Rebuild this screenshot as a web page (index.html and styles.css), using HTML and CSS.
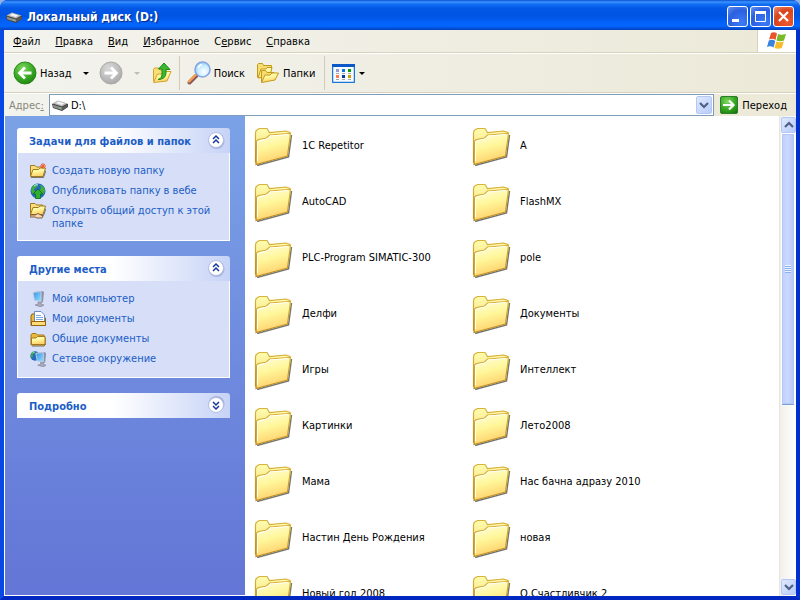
FILE: index.html
```html
<!DOCTYPE html>
<html lang="ru">
<head>
  <meta charset="UTF-8" />
  <meta name="viewport" content="width=device-width, initial-scale=1.0" />
  <title>Локальный диск (D:)</title>
  <link rel="stylesheet" href="styles.css">
</head>
<body>
  <!-- shared icons -->
  <svg class="defs" width="0" height="0" aria-hidden="true">
    <defs>
      <linearGradient id="folderFront" x1="0" y1="0" x2="0.3" y2="1">
        <stop offset="0" stop-color="#fffde0" /><stop offset="0.5" stop-color="#fff79a" /><stop offset="1" stop-color="#ffd06c" />
      </linearGradient>
      <linearGradient id="folderBack" x1="0" y1="0" x2="0" y2="1">
        <stop offset="0" stop-color="#fffbb0" /><stop offset="1" stop-color="#f5d860" />
      </linearGradient>
      <linearGradient id="folderEdge" x1="0" y1="0" x2="0" y2="1">
        <stop offset="0" stop-color="#d9b43c" /><stop offset="1" stop-color="#b98a1c" />
      </linearGradient>
      <radialGradient id="green" cx="0.4" cy="0.3" r="0.8">
        <stop offset="0" stop-color="#7fd860" /><stop offset="0.6" stop-color="#35a520" /><stop offset="1" stop-color="#1a7a0c" />
      </radialGradient>
      <radialGradient id="gray" cx="0.4" cy="0.3" r="0.8">
        <stop offset="0" stop-color="#dadada" /><stop offset="1" stop-color="#a5a5a5" />
      </radialGradient>
      <radialGradient id="lens" cx="0.6" cy="0.65" r="0.7">
        <stop offset="0" stop-color="#ffffff" /><stop offset="0.6" stop-color="#c4ebff" /><stop offset="1" stop-color="#7fc4f2" />
      </radialGradient>
      <linearGradient id="screen" x1="0" y1="0" x2="1" y2="1">
        <stop offset="0" stop-color="#2f8fe8" /><stop offset="1" stop-color="#8fe4ff" />
      </linearGradient>
      <symbol id="folder" viewBox="0 0 40 40">
        <path d="M4 39.500L35.500 31 38.500 9" fill="none" stroke="#3a3a3a" stroke-width="1.500" opacity="0.7" />
        <path d="M2.500 36V7q0-2.500 2-3.500l2-1h7.500l2.500 4 16-1.500 4.500 1.500v5L33 29z" fill="url(#folderBack)" stroke="url(#folderEdge)" stroke-width="1.200" />
        <path d="M3 38.500L3.500 15l2-1.500 8-1.500 3-3L37.500 7.500 34.500 30z" fill="url(#folderFront)" stroke="url(#folderEdge)" stroke-width="1.200" />
        <path d="M4.500 35V15.500l9.500-2.500 3-3 18.500-1.500" fill="none" stroke="#fffff4" />
      </symbol>
      <symbol id="smallFolder" viewBox="0 0 16 16">
        <path d="M2 15h12l2-2V6" fill="none" stroke="#77705c" />
        <path d="M1 14V4l1-1.500h4L7.500 4H14v2l1 1v7z" fill="#e9b93c" stroke="#a87818" />
        <path d="M1.500 13.500V7H6l1.500-1.500H15v8z" fill="url(#folderFront)" stroke="#a87818" />
      </symbol>
      <symbol id="openFolder" viewBox="0 0 16 16">
        <path d="M0.500 13V2.500h4.500L6.500 4h6v4" fill="#f9dd78" stroke="#a07a20" />
        <path d="M0.500 13.500L3 6.500h5.500L10 5h5.500L13 13.500z" fill="url(#folderFront)" stroke="#a07a20" />
        <path d="M1 14.500h12.500l2.500-7" fill="none" stroke="#4b4636" opacity="0.7" />
      </symbol>
      <symbol id="disk" viewBox="0 0 16 12">
        <path d="M0 5l6-3 10 3v3l-6 4-9-3z" fill="#3f3f3f" />
        <path d="M0.500 4.500L6 1.500l9.500 3L10 7.500z" fill="#b9b9b9" />
        <path d="M3.500 4l3-1.500 6 2L9.500 6z" fill="#f4f4f4" />
        <path d="M0.500 5.500L10 8.500v2.500L1.500 8.500z" fill="#8c8c8c" />
        <path d="M10 8.500l5.500-3V8L10 11z" fill="#5c5c5c" />
        <path d="M7 9h2" stroke="#7bd07b" />
      </symbol>
      <symbol id="computer" viewBox="0 0 16 16">
        <path d="M4 1l8-1 2 1-1 10-2 1z" fill="#8e93ac" />
        <path d="M3 1.500l8-1v10l-6.500-1z" fill="url(#screen)" stroke="#c6cbe0" />
        <path d="M8 11l3 .5V13l3 1-3 2-6-2 3-1z" fill="#a9a9b8" stroke="#74748a" stroke-width="0.500" />
      </symbol>
      <symbol id="globe" viewBox="0 0 16 16">
        <circle cx="8" cy="8" r="7.500" fill="#2467c4" />
        <path d="M2 4q3-4 6-3l-1 3-3 2 1 3-2 2Q0 8 2 4zM10 2q5 1 5 6l-2 4-2-3-2-1 2-3z" fill="#3fae3a" />
        <path d="M4 3q2-2 4-1" fill="none" stroke="#b8f0ff" />
      </symbol>
      <symbol id="chevrons" viewBox="0 0 20 20">
        <circle cx="10.500" cy="11" r="8" fill="#8090c0" opacity="0.5" />
        <circle cx="10" cy="10" r="7.500" fill="#ffffff" stroke="#b4bfe0" />
        <path d="M7 9l3-3 3 3M7 13l3-3 3 3" fill="none" stroke="#16389a" stroke-width="1.500" />
      </symbol>
      <symbol id="scrollUp" viewBox="0 0 10 8">
        <path d="M1 6l4-4 4 4" fill="none" stroke="#4d6185" stroke-width="2.200" />
      </symbol>
    </defs>
  </svg>

  <div class="window">
    <header class="titlebar">
      <svg class="disk-icon"><use href="#disk" /></svg>
      <h1>Локальный диск (D:)</h1>
      <div class="window-buttons">
        <button type="button" aria-label="Свернуть"><svg viewBox="0 0 19 19"><path d="M4 13.500h7" stroke="#fff" stroke-width="3" /></svg></button>
        <button type="button" aria-label="Развернуть"><svg viewBox="0 0 19 19"><path d="M4.500 4v10.500h10V4" fill="none" stroke="#fff" /><path d="M4 5.500h11" stroke="#fff" stroke-width="3" /></svg></button>
        <button type="button" class="close" aria-label="Закрыть"><svg viewBox="0 0 19 19"><path d="M5 5l9 9M14 5l-9 9" stroke="#fff" stroke-width="2.200" /></svg></button>
      </div>
    </header>

    <div class="content">
      <nav class="menubar">
        <button type="button"><u>Ф</u>айл</button>
        <button type="button"><u>П</u>равка</button>
        <button type="button"><u>В</u>ид</button>
        <button type="button"><u>И</u>збранное</button>
        <button type="button">С<u>е</u>рвис</button>
        <button type="button"><u>С</u>правка</button>
        <div class="flag">
          <svg viewBox="0 0 20 18">
            <path d="M4 1q3-1.500 6 .5L8.500 8q-3-2-6.500-.5z" fill="#e8552c" />
            <path d="M11 2q3 1.500 8 0l-2 6.500q-4 1.500-7.500 0z" fill="#78b928" />
            <path d="M1.800 8.500q3.500-1.500 6.500.5l-1.800 6.500q-3-2-6.500-.5z" fill="#3a83dc" />
            <path d="M9.300 9.500q4 1.500 7.500 0l-2 6.500q-4 1.500-7.300 0z" fill="#f6bd28" />
          </svg>
        </div>
      </nav>

      <div class="toolbar">
        <button type="button" class="tool">
          <svg width="24" height="24" viewBox="0 0 24 24"><circle cx="12" cy="12" r="11" fill="url(#green)" stroke="#2a8a1c" /><path d="M18.500 12H7M12 6.500L6.500 12l5.500 5.500" fill="none" stroke="#fff" stroke-width="2.800" /></svg>
          Назад
        </button>
        <button type="button" class="drop" aria-label="Список назад"></button>
        <button type="button" class="tool" aria-label="Вперед">
          <svg width="24" height="24" viewBox="0 0 24 24"><circle cx="12" cy="12" r="11" fill="url(#gray)" stroke="#a8a8a4" /><path d="M5.500 12H17M12 6.500l5.500 5.500-5.500 5.500" fill="none" stroke="#fff" stroke-width="2.800" /></svg>
        </button>
        <button type="button" class="drop disabled" aria-label="Список вперед" disabled></button>
        <button type="button" class="tool up" aria-label="Вверх">
          <svg width="20" height="22" viewBox="0 0 20 22"><path d="M1.500 19V7.500l1-1.500h4l1.500 2H13v4" fill="#f9df78" stroke="#d0a428" /><path d="M1.500 20.500L5.500 12h5l2-2.500h6.500L15 19z" fill="url(#folderFront)" stroke="#d0a428" /><path d="M6 17.500q4.500-1 4-7V7H6.500L12 1l6 6.500h-4V11q-.5 6.500-8 6.500z" fill="#3cb82e" stroke="#1f8a18" /></svg>
        </button>
        <span class="sep"></span>
        <button type="button" class="tool">
          <svg width="24" height="24" viewBox="0 0 24 24"><path d="M2.500 21.500l7-7" stroke="#8a5a5c" stroke-width="4" stroke-linecap="round" /><path d="M2 20.500l6.500-6.500" stroke="#f6a050" stroke-width="2.400" stroke-linecap="round" /><circle cx="15.500" cy="8.500" r="7.500" fill="url(#lens)" stroke="#86a6e4" stroke-width="1.600" /><path d="M11 7q1-3 4-3.500" fill="none" stroke="#fff" stroke-width="1.500" /></svg>
          Поиск
        </button>
        <button type="button" class="tool folders">
          <svg width="23" height="22" viewBox="0 0 23 22"><path d="M1.500 15.500v-13l1-1h4l1 2h8v4" fill="#f7dd70" stroke="#c49a1a" /><path d="M2 16L5 7h5l1-1.500h5l-2 9z" fill="url(#folderFront)" stroke="#c49a1a" /><path d="M5.500 20V8.500h4l1.500 2h7v3" fill="#f7dd70" stroke="#c49a1a" /><path d="M5.500 20.500L9 13h5l2-2h6.500L19 18z" fill="url(#folderFront)" stroke="#c49a1a" /></svg>
          Папки
        </button>
        <span class="sep"></span>
        <button type="button" class="tool views" aria-label="Вид">
          <svg width="23" height="19" viewBox="0 0 23 19"><rect x="0.500" y="0.500" width="22" height="18" rx="1" fill="#f7fbff" stroke="#1c78d8" stroke-width="1.500" /><path d="M0 1.500h23" stroke="#0c58c8" stroke-width="3" /><path d="M4 6.500h3" stroke="#9a9ad0" stroke-width="3" /><path d="M10 6.500h3" stroke="#1474d8" stroke-width="3" /><path d="M16 6.500h3" stroke="#0c9a0c" stroke-width="3" /><path d="M4 12.500h3" stroke="#ff7c50" stroke-width="3" /><path d="M10 12.500h3" stroke="#0838a0" stroke-width="3" /><path d="M16 12.500h3" stroke="#d09c08" stroke-width="3" /><path d="M4 9.500h3m3 0h3m3 0h3M4 15.500h3m3 0h3m3 0h3" stroke="#a8a8a8" /></svg>
        </button>
        <button type="button" class="drop" aria-label="Выбор вида"></button>
      </div>

      <form class="addressbar">
        <label for="address">Адрес<u>:</u></label>
        <div class="address-box">
          <svg class="disk-icon"><use href="#disk" /></svg>
          <input type="text" id="address" value="D:\" />
          <button type="button" class="xp-button" aria-label="Список адресов"><svg class="flip"><use href="#scrollUp" /></svg></button>
        </div>
        <button type="button" class="go">
          <svg width="18" height="18" viewBox="0 0 18 18"><rect x="0.500" y="0.500" width="17" height="17" rx="1.500" fill="url(#green)" stroke="#2b7d2b" /><path d="M3 9h10M9 4.500L13.500 9 9 13.500" fill="none" stroke="#fff" stroke-width="2.200" /></svg>
          Переход
        </button>
      </form>

      <main class="view">
        <aside class="sidebar">
          <section class="panel">
            <header><h2>Задачи для файлов и папок</h2><button type="button" aria-label="Свернуть задачи"><svg><use href="#chevrons" /></svg></button></header>
            <ul>
              <li><svg viewBox="0 0 16 16"><use href="#openFolder" /><path d="M13 0v6M10 3h6M11 1l4 4M15 1l-4 4" stroke="#f05a28" /></svg><a href="#">Создать новую папку</a></li>
              <li><svg viewBox="0 0 16 16"><use href="#globe" /><path d="M8 6l5 5h-2.500v4.500h-5V11H3z" fill="#2fae2f" stroke="#0d6b18" stroke-width="0.800" /></svg><a href="#">Опубликовать папку в вебе</a></li>
              <li><svg viewBox="0 0 16 16"><use href="#openFolder" y="-2" width="16" height="16" /><path d="M0 12h5l3-1.500 5 2.500-1 2H7l-2-1H0z" fill="#ffd5a8" stroke="#5a4430" stroke-width="0.800" /></svg><a href="#">Открыть общий доступ к этой папке</a></li>
            </ul>
          </section>
          <section class="panel">
            <header><h2>Другие места</h2><button type="button" aria-label="Свернуть места"><svg><use href="#chevrons" /></svg></button></header>
            <ul>
              <li><svg><use href="#computer" /></svg><a href="#">Мой компьютер</a></li>
              <li><svg viewBox="0 0 16 16"><path d="M1 14.500V5l1-2h3v4h10.500v7.500z" fill="#e8b840" stroke="#94650c" /><path d="M4.500 12V.5H11L14.500 4v8z" fill="#fff" stroke="#6a8cc0" /><path d="M6 4.500h5m-5 2h7m-7 2h7" stroke="#7ca8dc" /><path d="M1.500 10.500h14v4h-14z" fill="#ffdc78" stroke="#94650c" /></svg><a href="#">Мои документы</a></li>
              <li><svg><use href="#smallFolder" /></svg><a href="#">Общие документы</a></li>
              <li><svg viewBox="0 0 16 16"><use href="#globe" width="10" height="10" /><use href="#computer" x="3" y="1" width="15" height="15" /></svg><a href="#">Сетевое окружение</a></li>
            </ul>
          </section>
          <section class="panel">
            <header><h2>Подробно</h2><button type="button" aria-label="Развернуть подробности"><svg class="flip"><use href="#chevrons" /></svg></button></header>
          </section>
        </aside>

        <div class="files" id="fileList"></div>

        <div class="scrollbar">
          <button type="button" class="xp-button" aria-label="Прокрутить вверх"><svg><use href="#scrollUp" /></svg></button>
          <div class="track"><div class="thumb"><span class="grip"></span></div></div>
          <button type="button" class="xp-button" aria-label="Прокрутить вниз"><svg class="flip"><use href="#scrollUp" /></svg></button>
        </div>
      </main>
    </div>
  </div>

  <script>
    const fileList = document.getElementById("fileList");
    const folders = [
      "1C Repetitor", "A",
      "AutoCAD", "FlashMX",
      "PLC-Program SIMATIC-300", "pole",
      "Делфи", "Документы",
      "Игры", "Интеллект",
      "Картинки", "Лето2008",
      "Мама", "Нас бачна адразу 2010",
      "Настин День Рождения", "новая",
      "Новый год 2008", "О.Счастливчик 2"
    ];

    folders.forEach((name) => {
      const item = document.createElement("a");
      item.className = "file";
      item.href = "#";
      item.innerHTML = `<svg><use href="#folder" /></svg><span>${name}</span>`;
      fileList.appendChild(item);
    });
  </script>
</body>
</html>
```
FILE: styles.css
```css
* {
  box-sizing: border-box;
}
body {
  margin: 0;
  background: #8fb0e8;
  font-family: Tahoma, "DejaVu Sans Condensed", "DejaVu Sans", sans-serif;
  font-size: 11px;
  line-height: 13px;
  color: #000;
}
button, input {
  font: inherit;
  color: inherit;
  margin: 0;
  padding: 0;
  border: none;
  background: none;
}
svg {
  display: block;
  flex: none;
}
a {
  color: inherit;
  text-decoration: none;
}
.defs {
  position: absolute;
}
.flip {
  transform: scaleY(-1);
}
.window {
  display: flex;
  flex-direction: column;
  height: 100vh;
  overflow: hidden;
  border-radius: 8px 8px 0 0;
  background: #0a48e0;
}
.disk-icon {
  width: 16px;
  height: 12px;
}

/* title bar */
.titlebar {
  display: flex;
  align-items: center;
  flex: none;
  height: 30px;
  padding: 3px 6px 0;
  background: linear-gradient(#0a4fd0 0, #3c94ff 2px, #1470f4 4px, #0458e6 8px, #0054e3 16px, #0361f8 22px, #0366ff 26px, #0353dc 28px, #0040c0 30px);
}
.titlebar h1 {
  flex: 1;
  margin: 0 0 0 5px;
  font-size: 12px;
  line-height: 16px;
  color: #fff;
  text-shadow: 1px 1px 1px #0b2a80;
}
.window-buttons {
  display: flex;
  gap: 2px;
}
.window-buttons button {
  width: 21px;
  height: 21px;
  border: 1px solid #fff;
  border-radius: 3px;
  background: radial-gradient(circle at 70% 80%, #3f7cf6, #2a5fe0 60%, #6a94f0);
}
.window-buttons .close {
  background: radial-gradient(circle at 70% 80%, #ee5a2c, #d8441c 60%, #f0947c);
}

.content {
  display: flex;
  flex-direction: column;
  flex: 1;
  min-height: 0;
  border: 4px solid #0848e4;
  border-top: none;
  border-right-color: #0030d0;
  border-bottom-color: #0028c0;
  background: linear-gradient(90deg, #f3f3ee, #ece9d8);
}

/* menu */
.menubar {
  display: flex;
  align-items: center;
  flex: none;
  height: 23px;
  padding-left: 9px;
  gap: 15px;
  border-bottom: 1px solid #d6d2be;
}
.flag {
  display: flex;
  align-items: center;
  justify-content: center;
  align-self: stretch;
  width: 39px;
  margin-left: auto;
  border-left: 1px solid #d6d2be;
  background: #fff;
}
.flag svg {
  width: 20px;
  height: 18px;
}

/* toolbar */
.toolbar {
  display: flex;
  align-items: center;
  flex: none;
  height: 40px;
  padding-left: 9px;
  border-top: 1px solid #fff;
  border-bottom: 1px solid #d6d2be;
}
.tool {
  display: flex;
  align-items: center;
  gap: 3px;
}
.drop {
  width: 26px;
  height: 24px;
}
.drop::after {
  content: "";
  display: block;
  width: 0;
  margin: 0 auto;
  border: 3px solid transparent;
  border-top-color: #000;
  border-bottom: none;
}
.up {
  margin-left: 2px;
}
.tool + .drop {
  margin-left: 1px;
}
.drop.disabled::after {
  border-top-color: #c0beb4;
}
.sep {
  width: 1px;
  height: 34px;
  margin: 0 7px;
  background: #d0ccb8;
}
.folders {
  gap: 4px;
  margin-left: 11px;
}
.folders + .sep {
  margin-left: 9px;
}
.views + .drop {
  width: 12px;
}

/* address bar */
.addressbar {
  display: flex;
  align-items: center;
  flex: none;
  height: 23px;
  margin: 0;
  padding: 0 9px 0 5px;
  border-top: 1px solid #fff;
}
.addressbar label {
  width: 40px;
  color: #88867a;
}
.address-box {
  display: flex;
  align-items: center;
  flex: 1;
  height: 22px;
  padding: 0 1px 0 2px;
  border: 1px solid #7f9db9;
  background: #fff;
}
.address-box input {
  flex: 1;
  min-width: 0;
  margin-left: 3px;
  outline: none;
}
.xp-button {
  display: flex;
  align-items: center;
  justify-content: center;
  width: 16px;
  height: 18px;
  border: 1px solid #b4c8f6;
  border-radius: 2px;
  background: linear-gradient(135deg, #dfe8ff, #b8ccfa);
}
.xp-button svg {
  width: 10px;
  height: 8px;
}
.go {
  display: flex;
  align-items: center;
  gap: 4px;
  margin-left: 6px;
}

/* main view */
.view {
  display: flex;
  flex: 1;
  min-height: 0;
  background: #fff;
}
.sidebar {
  flex: none;
  display: flex;
  flex-direction: column;
  gap: 15px;
  width: 241px;
  padding: 12px 15px 12px 12px;
  border: solid #fff;
  border-width: 0 0 1px 1px;
  background: linear-gradient(#7ba2e7, #6375d6);
}
.panel header {
  display: flex;
  align-items: center;
  height: 25px;
  padding: 0 4px 1px 12px;
  border-radius: 3px 3px 0 0;
  background: linear-gradient(90deg, #fff 45%, #c6d3f7);
  color: #215dc6;
}
.panel h2 {
  flex: 1;
  margin: 3px 0 0;
  font-size: 11px;
  white-space: nowrap;
}
.panel header svg {
  width: 20px;
  height: 20px;
}
.panel ul {
  display: flex;
  flex-direction: column;
  gap: 4px;
  margin: 0;
  padding: 10px 12px;
  list-style: none;
  border: 1px solid #fff;
  border-top: none;
  background: #d6dff7;
  color: #215dc6;
}
.panel li {
  display: flex;
  gap: 6px;
}
.panel li svg {
  width: 16px;
  height: 16px;
}
.panel li a {
  padding-top: 1px;
}

/* folder tiles */
.files {
  flex: 1;
  display: grid;
  grid-template-columns: repeat(auto-fill, 218px);
  grid-auto-rows: 56px;
  align-content: start;
  padding: 2px 0 0 8px;
  overflow: hidden;
}
.file {
  display: flex;
  align-items: center;
  gap: 9px;
}
.file svg {
  width: 40px;
  height: 40px;
}
.file span {
  margin-bottom: 2px;
}

/* scrollbar */
.scrollbar {
  display: flex;
  flex-direction: column;
  flex: none;
  width: 17px;
  padding: 1px;
  border-left: 1px solid #e8e6dc;
  background: linear-gradient(90deg, #f1f0ea, #fff);
}
.scrollbar .xp-button {
  width: 15px;
  height: 16px;
}
.track {
  flex: 1;
}
.thumb {
  display: flex;
  align-items: center;
  justify-content: center;
  height: 61%;
  border: 1px solid #fff;
  border-bottom-color: #7c9fd8;
  border-radius: 2px;
  background: linear-gradient(90deg, #c0d0fa, #c9d8fd 50%, #b2c6f6);
  box-shadow: inset 0 0 0 1px #b4c8f6;
}
.grip {
  width: 6px;
  height: 8px;
  background: repeating-linear-gradient(#eef4fe 0 1px, #8cb0f8 1px 2px);
}
```
